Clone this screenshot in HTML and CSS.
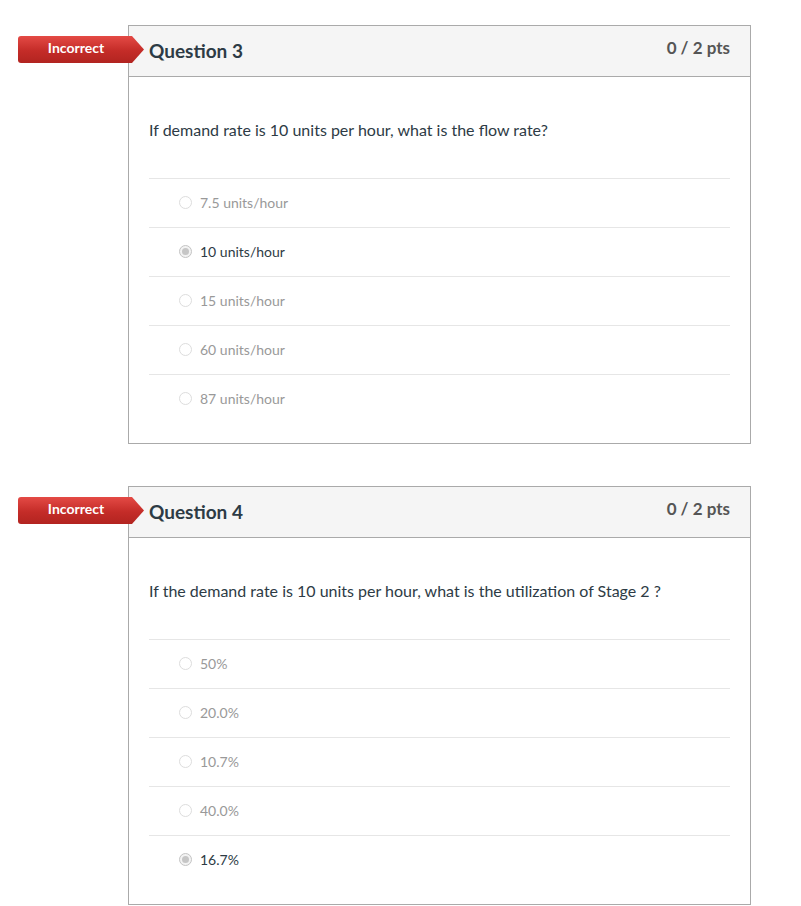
FILE: index.html
```html
<!DOCTYPE html>
<html>
<head>
<meta charset="utf-8">
<link rel="stylesheet" href="styles.css">
</head>
<body>
<div class="page">
  <div class="card">
    <div class="badge"><span>Incorrect</span></div>
    <div class="card-header">
      <h2 class="q-title">Question 3</h2>
      <div class="pts">0 / 2 pts</div>
    </div>
    <div class="card-body">
      <p class="q-text">If demand rate is 10 units per hour, what is the flow rate?</p>
      <ul class="answers">
        <li class="answer"><span class="radio"></span>7.5 units/hour</li>
        <li class="answer selected"><span class="radio"></span>10 units/hour</li>
        <li class="answer"><span class="radio"></span>15 units/hour</li>
        <li class="answer"><span class="radio"></span>60 units/hour</li>
        <li class="answer"><span class="radio"></span>87 units/hour</li>
      </ul>
    </div>
  </div>
  <div class="card">
    <div class="badge"><span>Incorrect</span></div>
    <div class="card-header">
      <h2 class="q-title">Question 4</h2>
      <div class="pts">0 / 2 pts</div>
    </div>
    <div class="card-body">
      <p class="q-text">If the demand rate is 10 units per hour, what is the utilization of Stage 2 ?</p>
      <ul class="answers">
        <li class="answer"><span class="radio"></span>50%</li>
        <li class="answer"><span class="radio"></span>20.0%</li>
        <li class="answer"><span class="radio"></span>10.7%</li>
        <li class="answer"><span class="radio"></span>40.0%</li>
        <li class="answer selected"><span class="radio"></span>16.7%</li>
      </ul>
    </div>
  </div>
</div>
</body>
</html>
```
FILE: styles.css
```css
* { box-sizing: border-box; }
html, body { margin: 0; padding: 0; background: #fff; }
body { font-family: Lato, "Open Sans", sans-serif; color: #2d3b45; }
.page {
  display: flex;
  flex-direction: column;
  gap: 42px;
  padding: 25px 0 0 128px;
}
.card {
  position: relative;
  width: 623px;
  border: 1px solid #aaa;
  background: #fff;
}
.card-header {
  height: 51px;
  background: #f5f5f5;
  border-bottom: 1px solid #aaa;
  display: flex;
  justify-content: space-between;
  align-items: flex-start;
  padding: 0 20px;
}
.q-title {
  margin: 0;
  padding-top: 14px;
  font-size: 19px;
  font-weight: 700;
  line-height: 22px;
  color: #2d3b45;
}
.pts {
  padding-top: 12px;
  font-size: 17px;
  font-weight: 700;
  line-height: 20px;
  color: #555;
}
.card-body {
  padding: 0 20px 20px 20px;
}
.q-text {
  margin: 0;
  padding: 42px 0 37px 0;
  font-size: 16px;
  line-height: 22px;
  color: #2d3b45;
}
.answers {
  list-style: none;
  margin: 0;
  padding: 0;
}
.answer {
  display: flex;
  align-items: center;
  height: 49px;
  border-top: 1px solid #e6e6e6;
  padding: 0 0 2px 30px;
  font-size: 14px;
  color: #999;
}
.answer.selected { color: #2d3b45; }
.radio {
  width: 13px;
  height: 13px;
  border-radius: 50%;
  border: 1px solid #ddd;
  background: #fff;
  margin-right: 8px;
  position: relative;
}
.answer.selected .radio {
  border-color: #c4c4c4;
  background: #f3f3f3;
}
.answer.selected .radio::after {
  content: "";
  position: absolute;
  left: 2px;
  top: 2px;
  width: 7px;
  height: 7px;
  border-radius: 50%;
  background: #c6c6c6;
}
.badge {
  position: absolute;
  left: -111px;
  top: 10px;
  width: 126px;
  height: 27px;
  background: linear-gradient(#e44a45, #c42c28 55%, #b22420);
  clip-path: polygon(0 0, 114px 0, 126px 50%, 114px 100%, 0 100%);
  border-radius: 3px 0 0 3px;
  display: flex;
  align-items: center;
}
.badge span {
  width: 116px;
  text-align: center;
  color: #fff;
  font-weight: 700;
  font-size: 14px;
  line-height: 16px;
  margin-top: -3px;
}
```
